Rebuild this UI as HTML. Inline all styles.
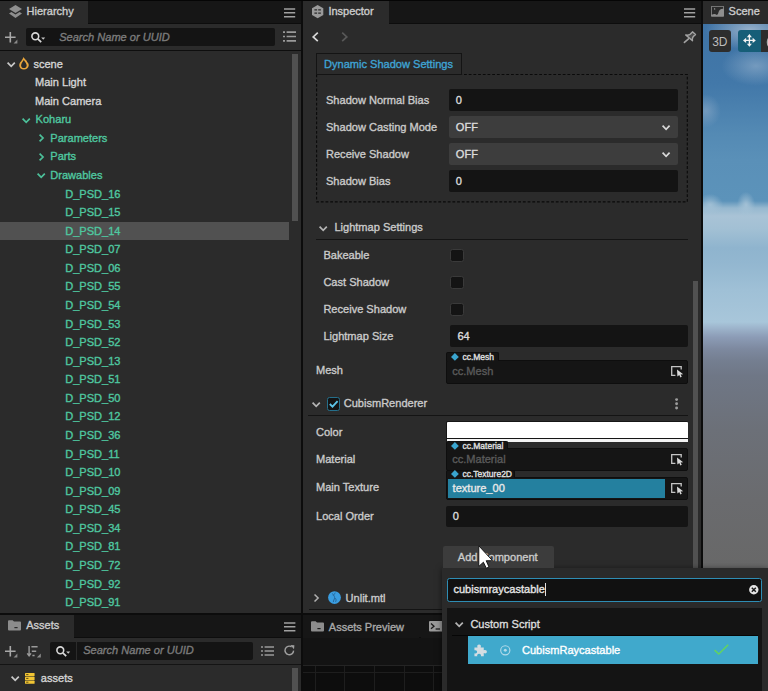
<!DOCTYPE html>
<html><head><meta charset="utf-8">
<style>
*{box-sizing:border-box;margin:0;padding:0}
html,body{width:768px;height:691px;overflow:hidden;background:#0c0c0c}
body{font-family:"Liberation Sans",Arial,sans-serif;font-size:11.06px;color:#cacaca;position:relative;-webkit-text-stroke:0.35px}
.a{position:absolute}
.panel{position:absolute;background:#2b2b2b}
.tabbar{position:absolute;background:#161616;border-bottom:1px solid #0d0d0d}
.tab{position:absolute;background:#2b2b2b}
.t{position:absolute;white-space:nowrap;line-height:14px;height:14px}
.tt{position:absolute;white-space:nowrap;line-height:14px;height:14px;font-size:11px;color:#cdcdcd}
.inp{position:absolute;background:#141414;border-radius:2px}
.sel{position:absolute;background:#3d3d3d;border-radius:2px}
.row{position:absolute;left:0;width:289px;height:18.57px;line-height:18.57px;white-space:nowrap}
.row span{position:absolute;top:0}
.g{color:#4fc8a0}
.w{color:#d4d4d4}
.ph{color:#7c7c7c;font-style:italic}
.chk{position:absolute;width:13.5px;height:12.8px;background:#141414;border:1.2px solid #3a3a3a;border-radius:2.5px}
.hr{position:absolute;height:1.2px;background:#141414}
.tag{position:absolute;background:#151515;border:1px solid #0e0e0e;border-bottom:none;border-radius:2px 2px 0 0;font-size:8.5px;color:#dcdcdc;line-height:7px;overflow:visible;white-space:nowrap;-webkit-text-stroke:0.4px}
.abox{position:absolute;background:#151515;border:1px solid #0e0e0e;border-radius:2px}
svg{position:absolute;overflow:visible}
</style></head><body>

<!-- HIERARCHY PANEL -->
<div class="panel" style="left:0;top:0;width:301.2px;height:612.9px"></div>
<div class="tabbar" style="left:0;top:0;width:301.2px;height:23.7px"></div>
<div class="tab" style="left:0;top:1px;width:88px;height:23px"></div>
<svg style="left:8.5px;top:4.5px" width="13" height="13.2" viewBox="0 0 13 13.2"><path d="M6.5 0L13 4L6.5 8L0 4Z" fill="#8e8e8e"/><path d="M0 8.4L2.4 6.9L6.5 9.5L10.6 6.9L13 8.4L6.5 13Z" fill="#8e8e8e"/></svg>
<div class="tt" style="left:26.6px;top:4.1px">Hierarchy</div>
<svg style="left:284px;top:8px" width="11.2" height="9.6" viewBox="0 0 11.2 9.6"><path d="M0 0.9H11.2M0 4.8H11.2M0 8.7H11.2" stroke="#a0a0a0" stroke-width="1.55"/></svg>
<!-- toolbar -->
<svg style="left:5px;top:32px" width="13" height="12" viewBox="0 0 13 12"><path d="M5.3 0V10.6M0 5.3H10.6" stroke="#a8a8a8" stroke-width="1.6"/><path d="M12.4 7.6V11.4H8.6Z" fill="#8a8a8a"/></svg>
<div class="inp" style="left:26px;top:28px;width:249.3px;height:17.9px"></div>
<svg style="left:31px;top:32px" width="15" height="12" viewBox="0 0 15 12"><circle cx="4.3" cy="4.3" r="3.4" fill="none" stroke="#d8d8d8" stroke-width="1.6"/><path d="M6.8 6.8L10.2 10.2" stroke="#d8d8d8" stroke-width="1.7"/><path d="M10.2 5.6H14.2L12.2 7.8Z" fill="#c8c8c8"/></svg>
<div class="t ph" style="left:59.2px;top:29.6px;font-size:11.06px">Search Name or UUID</div>
<svg style="left:283px;top:31px" width="13" height="11" viewBox="0 0 13 11"><path d="M3.6 1.2H13M3.6 5.5H13M3.6 9.8H13" stroke="#9a9a9a" stroke-width="1.7"/><path d="M0 1.2H2M0 5.5H2M0 9.8H2" stroke="#9a9a9a" stroke-width="1.7"/></svg>
<div class="hr" style="left:0;top:49.9px;width:301.2px;height:1.1px;background:#0e0e0e"></div>
<!-- scrollbar -->
<div class="a" style="left:292.4px;top:54px;width:5.6px;height:167.2px;background:#515151"></div>
<!-- selected row -->
<div class="a" style="left:0;top:221.8px;width:289px;height:18.6px;background:#515151"></div>
<div class="row" style="top:54.60px"><span class="w" style="left:33.4px">scene</span></div>
<div class="row" style="top:73.17px"><span class="w" style="left:35px">Main Light</span></div>
<div class="row" style="top:91.74px"><span class="w" style="left:35px">Main Camera</span></div>
<div class="row" style="top:110.31px"><span class="g" style="left:35.6px">Koharu</span></div>
<div class="row" style="top:128.88px"><span class="g" style="left:50.3px">Parameters</span></div>
<div class="row" style="top:147.45px"><span class="g" style="left:50.3px">Parts</span></div>
<div class="row" style="top:166.02px"><span class="g" style="left:50.3px">Drawables</span></div>
<div class="row" style="top:184.59px"><span class="g" style="left:65.2px">D_PSD_16</span></div>
<div class="row" style="top:203.16px"><span class="g" style="left:65.2px">D_PSD_15</span></div>
<div class="row" style="top:221.73px"><span class="g" style="left:65.2px">D_PSD_14</span></div>
<div class="row" style="top:240.30px"><span class="g" style="left:65.2px">D_PSD_07</span></div>
<div class="row" style="top:258.87px"><span class="g" style="left:65.2px">D_PSD_06</span></div>
<div class="row" style="top:277.44px"><span class="g" style="left:65.2px">D_PSD_55</span></div>
<div class="row" style="top:296.01px"><span class="g" style="left:65.2px">D_PSD_54</span></div>
<div class="row" style="top:314.58px"><span class="g" style="left:65.2px">D_PSD_53</span></div>
<div class="row" style="top:333.15px"><span class="g" style="left:65.2px">D_PSD_52</span></div>
<div class="row" style="top:351.72px"><span class="g" style="left:65.2px">D_PSD_13</span></div>
<div class="row" style="top:370.29px"><span class="g" style="left:65.2px">D_PSD_51</span></div>
<div class="row" style="top:388.86px"><span class="g" style="left:65.2px">D_PSD_50</span></div>
<div class="row" style="top:407.43px"><span class="g" style="left:65.2px">D_PSD_12</span></div>
<div class="row" style="top:426.00px"><span class="g" style="left:65.2px">D_PSD_36</span></div>
<div class="row" style="top:444.57px"><span class="g" style="left:65.2px">D_PSD_11</span></div>
<div class="row" style="top:463.14px"><span class="g" style="left:65.2px">D_PSD_10</span></div>
<div class="row" style="top:481.71px"><span class="g" style="left:65.2px">D_PSD_09</span></div>
<div class="row" style="top:500.28px"><span class="g" style="left:65.2px">D_PSD_45</span></div>
<div class="row" style="top:518.85px"><span class="g" style="left:65.2px">D_PSD_34</span></div>
<div class="row" style="top:537.42px"><span class="g" style="left:65.2px">D_PSD_81</span></div>
<div class="row" style="top:555.99px"><span class="g" style="left:65.2px">D_PSD_72</span></div>
<div class="row" style="top:574.56px"><span class="g" style="left:65.2px">D_PSD_92</span></div>
<div class="row" style="top:593.13px"><span class="g" style="left:65.2px">D_PSD_91</span></div>
<svg style="left:6.9px;top:61.8px" width="8.4" height="5.0" viewBox="0 0 8.4 5.0"><path d="M0.59 0.59L4.20 4.24L7.81 0.59" fill="none" stroke="#c8c8c8" stroke-width="1.7"/></svg>
<svg style="left:21.8px;top:117.6px" width="8.4" height="5.0" viewBox="0 0 8.4 5.0"><path d="M0.59 0.59L4.20 4.24L7.81 0.59" fill="none" stroke="#4cc09a" stroke-width="1.7"/></svg>
<svg style="left:38.8px;top:134.2px" width="4.8" height="8.0" viewBox="0 0 4.8 8.0"><path d="M0.59 0.59L4.04 4.00L0.59 7.41" fill="none" stroke="#4cc09a" stroke-width="1.7"/></svg>
<svg style="left:38.8px;top:152.8px" width="4.8" height="8.0" viewBox="0 0 4.8 8.0"><path d="M0.59 0.59L4.04 4.00L0.59 7.41" fill="none" stroke="#4cc09a" stroke-width="1.7"/></svg>
<svg style="left:36.7px;top:173.3px" width="8.4" height="5.0" viewBox="0 0 8.4 5.0"><path d="M0.59 0.59L4.20 4.24L7.81 0.59" fill="none" stroke="#4cc09a" stroke-width="1.7"/></svg>
<svg style="left:19.1px;top:56.6px" width="10" height="12.6" viewBox="0 0 10 12.6"><path fill-rule="evenodd" d="M4.6 0C5 1.4 6.4 2.4 7.4 3.4C8.2 4.2 7.8 4.8 8.4 5.2C9.4 6 9.9 7.4 9.7 8.7C9.4 11 7.2 12.6 4.9 12.6C2.4 12.6 0.2 10.9 0.2 8.2C0.2 5.7 2 4.5 3 2.9C3.6 1.9 4.2 0.9 4.6 0ZM4.8 3C5.6 4.6 7.7 6.4 7.7 8.4C7.7 10 6.4 11 4.9 11C3.4 11 2.1 10 2.1 8.4C2.1 6.4 3.9 4.8 4.8 3Z" fill="#e8a63c"/></svg>

<!-- INSPECTOR PANEL -->
<div class="panel" style="left:303px;top:0;width:397.8px;height:612.9px"></div>
<div class="tabbar" style="left:303px;top:0;width:397.8px;height:23.7px"></div>
<div class="tab" style="left:303px;top:1px;width:86.2px;height:23px"></div>
<svg style="left:311.8px;top:4.5px" width="11.3" height="13.3" viewBox="0 0 11.3 13.3"><path d="M5.65 0L11.3 3.3V10L5.65 13.3L0 10V3.3Z" fill="#9a9a9a"/><path d="M2.4 4.9H5.1M6.2 4.9H8.9M2.4 8.1H5.1M6.2 8.1H8.9" stroke="#2b2b2b" stroke-width="1.3"/></svg>
<div class="tt" style="left:328.4px;top:4.1px">Inspector</div>
<svg style="left:684px;top:8px" width="11.2" height="9.6" viewBox="0 0 11.2 9.6"><path d="M0 0.9H11.2M0 4.8H11.2M0 8.7H11.2" stroke="#a0a0a0" stroke-width="1.55"/></svg>
<svg style="left:312.4px;top:32.4px" width="7" height="10" viewBox="0 0 7 10"><path d="M5.8 0.6L1.2 4.9L5.8 9.2" fill="none" stroke="#d8d8d8" stroke-width="1.7"/></svg>
<svg style="left:340.8px;top:32.4px" width="7" height="10" viewBox="0 0 7 10"><path d="M1.2 0.6L5.8 4.9L1.2 9.2" fill="none" stroke="#585858" stroke-width="1.7"/></svg>
<svg style="left:684px;top:31px" width="12" height="12" viewBox="0 0 12 12"><path d="M1.7 3.9C4.6 4.6 6.6 3.6 8.5 0.8L11.5 3.6C8.6 5.4 7.8 7.2 8.5 9.8Z" fill="rgba(162,162,162,0.25)" stroke="#a2a2a2" stroke-width="1.4" stroke-linejoin="round"/><path d="M4.5 7.8L0.4 11.4" stroke="#a2a2a2" stroke-width="1.6" stroke-linecap="round"/></svg>

<svg style="left:316.2px;top:74px" width="372" height="129" viewBox="0 0 372 129"><path d="M0.6 0.5V127.9H371.3V0.5H145" fill="none" stroke="#0a0a0a" stroke-width="1.1" stroke-dasharray="2.8 1.9"/></svg>
<div class="a" style="left:316.2px;top:53.2px;width:145.4px;height:21.6px;border:1px solid #141414;background:#2b2b2b"></div>
<div class="t" style="left:324px;top:56.7px;color:#3fa3d4">Dynamic Shadow Settings</div>
<div class="t" style="left:326px;top:93.0px">Shadow Normal Bias</div><div class="inp" style="left:448.7px;top:88.9px;width:229.4px;height:22.1px"></div><div class="t" style="left:455.8px;top:93.0px;color:#dcdcdc">0</div>
<div class="t" style="left:326px;top:120.2px">Shadow Casting Mode</div><div class="sel" style="left:448.7px;top:116.1px;width:229.4px;height:22.1px"></div><div class="t" style="left:455.8px;top:120.2px;color:#dcdcdc">OFF</div>
<svg style="left:662px;top:124.8px" width="8.2" height="5" viewBox="0 0 8.2 5"><path d="M0.59 0.59L4.10 4.24L7.60 0.59" fill="none" stroke="#d8d8d8" stroke-width="1.7"/></svg>
<div class="t" style="left:326px;top:147.3px">Receive Shadow</div><div class="sel" style="left:448.7px;top:143.2px;width:229.4px;height:22.1px"></div><div class="t" style="left:455.8px;top:147.3px;color:#dcdcdc">OFF</div>
<svg style="left:662px;top:151.89999999999998px" width="8.2" height="5" viewBox="0 0 8.2 5"><path d="M0.59 0.59L4.10 4.24L7.60 0.59" fill="none" stroke="#d8d8d8" stroke-width="1.7"/></svg>
<div class="t" style="left:326px;top:174.4px">Shadow Bias</div><div class="inp" style="left:448.7px;top:170.3px;width:229.4px;height:22.1px"></div><div class="t" style="left:455.8px;top:174.4px;color:#dcdcdc">0</div>
<svg style="left:319.2px;top:225.6px" width="8.4" height="5.0" viewBox="0 0 8.4 5.0"><path d="M0.59 0.59L4.20 4.24L7.81 0.59" fill="none" stroke="#b4b4b4" stroke-width="1.7"/></svg>
<div class="t" style="left:334.4px;top:220.3px">Lightmap Settings</div>
<div class="hr" style="left:316.2px;top:238.5px;width:371.8px"></div>
<div class="t" style="left:323.4px;top:248.1px">Bakeable</div><div class="chk" style="left:450.2px;top:249.1px"></div>
<div class="t" style="left:323.4px;top:275.2px">Cast Shadow</div><div class="chk" style="left:450.2px;top:276.2px"></div>
<div class="t" style="left:323.4px;top:302.3px">Receive Shadow</div><div class="chk" style="left:450.2px;top:303.3px"></div>
<div class="t" style="left:323.4px;top:329px">Lightmap Size</div><div class="inp" style="left:450.3px;top:325.1px;width:237.7px;height:21.9px"></div><div class="t" style="left:457.4px;top:329px;color:#dcdcdc">64</div>
<div class="t" style="left:316px;top:363.3px">Mesh</div>
<div class="abox" style="left:445.8px;top:359.6px;width:242.2px;height:24.2px"></div>
<div class="tag" style="left:445.8px;top:352.2px;width:53.4px;height:8.4px;padding:0.8px 0 0 15.6px">cc.Mesh</div>
<svg style="left:451.2px;top:352.8px" width="7.8" height="7.8" viewBox="0 0 7 7"><path d="M3.5 0L7 3.5L3.5 7L0 3.5Z" fill="#3aa5cf"/></svg>
<div class="t" style="left:452.2px;top:364.1px;color:#5a5a5a">cc.Mesh</div>
<svg style="left:670.6px;top:366.2px" width="13" height="11.4" viewBox="0 0 13 11.4"><path d="M4.4 9.4H0.7V0.7H10.2V3.6" fill="none" stroke="#c4c4c4" stroke-width="1.3"/><path d="M6 3.4L12.2 8.2L9.6 8.4L10.8 10.8L9.4 11.4L8.3 9L6.4 10.6Z" fill="#d8d8d8"/></svg>
<svg style="left:311.6px;top:401.7px" width="8.4" height="5.0" viewBox="0 0 8.4 5.0"><path d="M0.59 0.59L4.20 4.24L7.81 0.59" fill="none" stroke="#b4b4b4" stroke-width="1.7"/></svg>
<div class="a" style="left:326.8px;top:397px;width:13.3px;height:13.6px;border:1.4px solid #256f8b;border-radius:2.5px;background:#141414"></div>
<svg style="left:328.8px;top:399.8px" width="9.4" height="8" viewBox="0 0 9.4 8"><path d="M0.8 4L3.5 6.6L8.6 1.2" fill="none" stroke="#5cc3e6" stroke-width="1.9"/></svg>
<div class="t" style="left:343.7px;top:396.2px">CubismRenderer</div>
<svg style="left:674.6px;top:398.2px" width="3.2" height="12" viewBox="0 0 3.2 12"><circle cx="1.6" cy="1.6" r="1.45" fill="#9c9c9c"/><circle cx="1.6" cy="5.8" r="1.45" fill="#9c9c9c"/><circle cx="1.6" cy="10" r="1.45" fill="#9c9c9c"/></svg>
<div class="hr" style="left:307.8px;top:414.9px;width:380.2px"></div>
<div class="t" style="left:316px;top:425.1px">Color</div>
<div class="a" style="left:445.8px;top:420.6px;width:242.6px;height:21.8px;background:#161616;border-radius:2px"></div>
<div class="a" style="left:447px;top:422px;width:240.6px;height:16.2px;background:#ffffff;border-radius:1px 1px 0 0"></div>
<div class="a" style="left:447px;top:439.3px;width:240.6px;height:2.6px;background:#f4f4f4"></div>
<div class="t" style="left:316px;top:451.7px">Material</div>
<div class="abox" style="left:445.8px;top:448.2px;width:242.2px;height:23px"></div>
<div class="tag" style="left:445.8px;top:440.6px;width:62px;height:8.6px;padding:1.2px 0 0 15.6px">cc.Material</div>
<svg style="left:451.2px;top:441.8px" width="7.8" height="7.8" viewBox="0 0 7 7"><path d="M3.5 0L7 3.5L3.5 7L0 3.5Z" fill="#3aa5cf"/></svg>
<div class="t" style="left:452.2px;top:452.4px;color:#5a5a5a">cc.Material</div>
<svg style="left:670.6px;top:454.2px" width="13" height="11.4" viewBox="0 0 13 11.4"><path d="M4.4 9.4H0.7V0.7H10.2V3.6" fill="none" stroke="#c4c4c4" stroke-width="1.3"/><path d="M6 3.4L12.2 8.2L9.6 8.4L10.8 10.8L9.4 11.4L8.3 9L6.4 10.6Z" fill="#d8d8d8"/></svg>
<div class="t" style="left:316px;top:480.3px">Main Texture</div>
<div class="abox" style="left:445.8px;top:477.2px;width:242.2px;height:23.1px"></div>
<div class="tag" style="left:445.8px;top:470px;width:69.6px;height:8.2px;padding:0.4px 0 0 15.6px">cc.Texture2D</div>
<svg style="left:451.2px;top:469.8px" width="7.8" height="7.8" viewBox="0 0 7 7"><path d="M3.5 0L7 3.5L3.5 7L0 3.5Z" fill="#3aa5cf"/></svg>
<div class="a" style="left:448.4px;top:479.2px;width:216.4px;height:18.6px;background:#24809f"></div>
<div class="t" style="left:452.6px;top:481.2px;color:#e8e8e8">texture_00</div>
<svg style="left:670.6px;top:482.8px" width="13" height="11.4" viewBox="0 0 13 11.4"><path d="M4.4 9.4H0.7V0.7H10.2V3.6" fill="none" stroke="#c4c4c4" stroke-width="1.3"/><path d="M6 3.4L12.2 8.2L9.6 8.4L10.8 10.8L9.4 11.4L8.3 9L6.4 10.6Z" fill="#d8d8d8"/></svg>
<div class="t" style="left:316px;top:508.5px">Local Order</div><div class="inp" style="left:446.4px;top:505.6px;width:241.6px;height:21.3px"></div><div class="t" style="left:452.8px;top:508.9px;color:#dcdcdc">0</div>
<div class="a" style="left:442.9px;top:546.2px;width:110.8px;height:22px;background:#3c3c3c;border-radius:2px 2px 0 0;z-index:2"></div><div class="t" style="left:457.8px;top:549.8px;z-index:2">Add Component</div>
<svg style="left:313.8px;top:594px" width="4.8" height="8" viewBox="0 0 4.8 8"><path d="M0.52 0.52L4.12 4.00L0.52 7.47" fill="none" stroke="#b0b0b0" stroke-width="1.5"/></svg>
<svg style="left:327.8px;top:591.4px" width="13" height="13.1" viewBox="0 0 13 13"><circle cx="6.5" cy="6.5" r="6.4" fill="#3a9de0"/><path d="M4.4 2.4C5 3.8 6.6 4.6 6.6 6.6C6.6 8.4 5.2 9.4 5.4 11M7.2 1.6C6.6 3.2 5.6 3.6 5.2 4.6M7 7C8.4 8 8.2 9.4 7.6 10.8" fill="none" stroke="#26679c" stroke-width="1"/></svg>
<div class="t" style="left:345.6px;top:590.9px">Unlit.mtl</div>
<div class="hr" style="left:308.6px;top:609.1px;width:137px"></div>
<div class="a" style="left:692.8px;top:281px;width:5.2px;height:290px;background:#515151"></div>

<!-- SCENE PANEL -->
<div class="panel" style="left:703px;top:0;width:65px;height:568px"></div>
<div class="a" style="left:703px;top:0;width:65px;height:1px;background:#171717"></div>
<svg style="left:711.3px;top:5.7px" width="13" height="10.8" viewBox="0 0 13 10.8"><rect x="0" y="0" width="13" height="10.8" rx="0.8" fill="#8e8e8e"/><path d="M0.8 0.8H12.2V2.8C9.6 2.6 8.2 4 7.6 6C7.2 7.6 6.8 8.6 5.8 9C4.6 7.6 2.4 7.6 0.8 8.8Z" fill="#2b2b2b"/><circle cx="3.6" cy="2.9" r="0.7" fill="#a8a8a8"/></svg>
<div class="tt" style="left:728.6px;top:4.1px">Scene</div>
<div class="a" id="sky" style="left:703px;top:23.7px;width:65px;height:544.3px;overflow:hidden;background:linear-gradient(#3f73a5 0px,#4278a9 60px,#548ab4 110px,#5a90b8 136px,#5c93ba 177px,#96b8cf 184px,#a9c3d6 192px,#a2c0d4 205px,#8fb4ce 224px,#93b7d0 240px,#9fc0d6 266px,#a8c6da 298px,#9fb7ce 303px,#8c9cb6 313px,#7d899f 325px,#747e90 337px,#6f7786 352px,#6c7078 406px,#6a6b6e 476px,#686868 544px)">
<div class="a" style="left:2px;top:-14px;width:90px;height:40px;background:radial-gradient(ellipse at center,rgba(165,186,208,0.85),rgba(165,186,208,0) 70%)"></div>
<div class="a" style="left:18px;top:22px;width:70px;height:40px;background:radial-gradient(ellipse at center,rgba(150,178,205,0.6),rgba(150,178,205,0) 70%)"></div>
<div class="a" style="left:-12px;top:70px;width:30px;height:34px;background:radial-gradient(ellipse at center,rgba(140,170,200,0.6),rgba(140,170,200,0) 70%)"></div>
<div class="a" style="left:34px;top:168px;width:18px;height:26px;background:radial-gradient(ellipse at center,rgba(165,194,214,0.95),rgba(165,194,214,0) 72%)"></div>
<div class="a" style="left:-6px;top:170px;width:26px;height:22px;background:radial-gradient(ellipse at center,rgba(165,194,214,0.9),rgba(165,194,214,0) 72%)"></div>
</div>
<div class="a" style="left:708.6px;top:30px;width:22.4px;height:21.8px;background:#2d2d2d;border-radius:3px"></div>
<div class="t" style="left:712.2px;top:34.6px;font-size:12px;color:#bcbcbc;-webkit-text-stroke:0">3D</div>
<div class="a" style="left:738.3px;top:30px;width:22.5px;height:21.8px;background:#165e78;border-radius:3px 0 0 3px"></div>
<div class="a" style="left:760.8px;top:30px;width:8px;height:21.8px;background:#2d2d2d"></div>
<svg style="left:765.6px;top:35.6px" width="6" height="11" viewBox="0 0 6 11"><path d="M5 1C1 2 0.6 8 3 10.4" fill="none" stroke="#b0b0b0" stroke-width="1.5"/></svg>
<svg style="left:743px;top:34.4px" width="12.8" height="12.8" viewBox="0 0 13 13"><path d="M6.5 0L9.1 3.2H7.2V5.8H9.8V3.9L13 6.5L9.8 9.1V7.2H7.2V9.8H9.1L6.5 13L3.9 9.8H5.8V7.2H3.2V9.1L0 6.5L3.2 3.9V5.8H5.8V3.2H3.9Z" fill="#f2f2f2"/></svg>

<!-- ASSETS PANEL -->
<div class="panel" style="left:0;top:614.8px;width:301.2px;height:77px"></div>
<div class="tabbar" style="left:0;top:614.8px;width:301.2px;height:22.9px"></div>
<div class="tab" style="left:0;top:614.8px;width:74px;height:23px"></div>
<svg style="left:8px;top:620.2px" width="13" height="11" viewBox="0 0 13 11"><path d="M0 1.2Q0 0.2 1 0.2H4.6L6 1.6H12Q13 1.6 13 2.6V9.6Q13 10.6 12 10.6H1Q0 10.6 0 9.6Z" fill="#8c8c8c"/><path d="M6.4 7.6H9.6" stroke="#2b2b2b" stroke-width="1.2"/></svg>
<div class="tt" style="left:26.2px;top:618.3px">Assets</div>
<svg style="left:284px;top:621.8px" width="11.4" height="9.6" viewBox="0 0 11.4 9.6"><path d="M0 0.9H11.4M0 4.8H11.4M0 8.7H11.4" stroke="#a0a0a0" stroke-width="1.5"/></svg>
<svg style="left:5px;top:645.8px" width="13" height="12" viewBox="0 0 13 12"><path d="M5.3 0V10.6M0 5.3H10.6" stroke="#a8a8a8" stroke-width="1.6"/><path d="M12.4 7.6V11.4H8.6Z" fill="#8a8a8a"/></svg>
<svg style="left:27.2px;top:645.6px" width="14" height="12" viewBox="0 0 14 12"><path d="M2.1 0V9.6M0.2 7.4L2.1 9.8L4 7.4" fill="none" stroke="#9a9a9a" stroke-width="1.4"/><path d="M4.4 0.8H10.6M4.8 5.2H9.2M5.4 9.4H7.6" stroke="#9a9a9a" stroke-width="1.5"/><path d="M13.8 7.4V11.4H9.8Z" fill="#8a8a8a"/></svg>
<div class="inp" style="left:50.2px;top:641.9px;width:202.4px;height:18.2px"></div>
<div class="a" style="left:76.3px;top:641.9px;width:1px;height:18.2px;background:#2b2b2b"></div>
<svg style="left:56.2px;top:645.8px" width="15" height="12" viewBox="0 0 15 12"><circle cx="4.3" cy="4.3" r="3.4" fill="none" stroke="#d8d8d8" stroke-width="1.6"/><path d="M6.8 6.8L10.2 10.2" stroke="#d8d8d8" stroke-width="1.7"/><path d="M10.2 5.6H14.2L12.2 7.8Z" fill="#c8c8c8"/></svg>
<div class="t ph" style="left:83.2px;top:643.3px">Search Name or UUID</div>
<svg style="left:261px;top:645.6px" width="13" height="10" viewBox="0 0 13 10"><path d="M3.6 1H13M3.6 5H13M3.6 9H13" stroke="#9a9a9a" stroke-width="1.6"/><path d="M0 1H2M0 5H2M0 9H2" stroke="#9a9a9a" stroke-width="1.6"/></svg>
<svg style="left:284px;top:645px" width="11" height="11" viewBox="0 0 11 11"><path d="M9.6 5.6A4.3 4.3 0 1 1 7.6 1.8" fill="none" stroke="#a0a0a0" stroke-width="1.4"/><path d="M6.4 0L10.4 0.2L10 4.2Z" fill="#a0a0a0"/></svg>
<div class="hr" style="left:0;top:664px;width:301.2px;height:1.4px"></div>
<div class="a" style="left:292.4px;top:668px;width:5.6px;height:24px;background:#515151"></div>
<div class="t w" style="left:40.8px;top:670.6px;color:#d4d4d4">assets</div>
<svg style="left:11px;top:675.9px" width="8.4" height="5.0" viewBox="0 0 8.4 5.0"><path d="M0.59 0.59L4.20 4.24L7.81 0.59" fill="none" stroke="#c8c8c8" stroke-width="1.7"/></svg>
<svg style="left:25px;top:673.1px" width="9.6" height="10.8" viewBox="0 0 9.6 10.8"><rect x="0" y="0" width="9.6" height="3.2" rx="0.6" fill="#f2c534"/><rect x="0" y="3.8" width="9.6" height="3.2" rx="0.6" fill="#f2c534"/><rect x="0" y="7.6" width="9.6" height="3.2" rx="0.6" fill="#f2c534"/><path d="M1.2 1.6H3.4M1.2 5.4H3.4M1.2 9.2H3.4" stroke="#5a4810" stroke-width="1"/></svg>

<!-- ASSETS PREVIEW PANEL -->
<div class="a" style="left:303px;top:614.8px;width:145px;height:77px;background:#141414"></div>
<div class="tabbar" style="left:303px;top:614.8px;width:145px;height:23px"></div>
<div class="tab" style="left:303px;top:614.8px;width:116.4px;height:23px;background:#161616"></div>
<div class="tab" style="left:420.6px;top:614.8px;width:30px;height:23px;background:#161616"></div>
<svg style="left:311.4px;top:620.7px" width="13" height="11" viewBox="0 0 13 11"><path d="M0 1.2Q0 0.2 1 0.2H4.6L6 1.6H12Q13 1.6 13 2.6V9.6Q13 10.6 12 10.6H1Q0 10.6 0 9.6Z" fill="#8c8c8c"/><path d="M6.4 7.6H9.6" stroke="#1c1c1c" stroke-width="1.2"/></svg>
<div class="tt" style="left:328.8px;top:619.6px;color:#a8a8a8">Assets Preview</div>
<svg style="left:429px;top:620.6px" width="14" height="11" viewBox="0 0 14 11"><rect x="0" y="0" width="14" height="10.4" rx="1" fill="#9a9a9a"/><path d="M2 2.6L5 5.2L2 7.8" fill="none" stroke="#1c1c1c" stroke-width="1.3"/><path d="M6.6 8H11" stroke="#1c1c1c" stroke-width="1.3"/></svg>
<div class="a" style="left:303px;top:637.6px;width:145px;height:28px;background:#131313"></div>
<div class="a" style="left:303px;top:665.6px;width:145px;height:26px;background:#0d0d0d"></div>
<div class="a" style="left:314.7px;top:665.6px;width:1px;height:26px;background:#1e1e1e"></div><div class="a" style="left:344px;top:665.6px;width:1px;height:26px;background:#1e1e1e"></div><div class="a" style="left:373.7px;top:665.6px;width:1px;height:26px;background:#1e1e1e"></div><div class="a" style="left:403.6px;top:665.6px;width:1px;height:26px;background:#1e1e1e"></div><div class="a" style="left:433.3px;top:665.6px;width:1px;height:26px;background:#1e1e1e"></div><div class="a" style="left:303px;top:671.8px;width:145px;height:1px;background:#1e1e1e"></div><div class="a" style="left:303px;top:664.8px;width:145px;height:1px;background:#242424"></div>

<!-- ADD COMPONENT POPUP -->
<div class="a" style="left:442.1px;top:568.1px;width:326px;height:123px;background:#2a2a2a;box-shadow:0 1px 6px rgba(0,0,0,0.55)"></div>
<div class="a" style="left:447px;top:608.2px;width:315px;height:83px;background:#141414"></div>
<div class="a" style="left:447px;top:577.6px;width:315px;height:24.2px;background:#111111;border:1.2px solid #2e8db4;border-radius:2.5px"></div>
<div class="t" style="left:453.4px;top:582.4px;color:#e4e4e4">cubismraycastable</div>
<div class="a" style="left:545.2px;top:583.2px;width:1px;height:13px;background:#e0e0e0"></div>
<svg style="left:749px;top:584.8px" width="10" height="10" viewBox="0 0 10 10"><circle cx="4.8" cy="4.8" r="4.7" fill="#e4e4e4"/><path d="M2.8 2.8L6.8 6.8M6.8 2.8L2.8 6.8" stroke="#1a1a1a" stroke-width="1.5"/></svg>
<div class="t" style="left:470.4px;top:616.8px;color:#dcdcdc">Custom Script</div>
<div class="hr" style="left:451.8px;top:634.7px;width:306.2px;background:#060606"></div>
<div class="a" style="left:468.3px;top:636px;width:289.7px;height:28.2px;background:#40a9cc"></div>
<div class="t" style="left:522px;top:642.8px;color:#ffffff">CubismRaycastable</div>
<svg style="left:714.4px;top:644px" width="15" height="11" viewBox="0 0 15 11"><path d="M0.6 6.2L4.8 10L14.2 0.8" fill="none" stroke="#62d35f" stroke-width="1.6"/></svg>
<svg style="left:454.6px;top:621.9px" width="8.4" height="5.0" viewBox="0 0 8.4 5.0"><path d="M0.59 0.59L4.20 4.24L7.81 0.59" fill="none" stroke="#b4b4b4" stroke-width="1.7"/></svg>
<svg style="left:473.6px;top:644px" width="13.3" height="12.7" viewBox="0 0 12 12" preserveAspectRatio="none"><path d="M0.4 3.4H3.2C2.4 1.4 3.4 0.4 4.6 0.4C5.8 0.4 6.8 1.4 6 3.4H8.8V6C10.6 5.2 11.6 6.2 11.6 7.3C11.6 8.4 10.6 9.4 8.8 8.6V11.6H6.2C6.8 10 5.8 9.2 4.6 9.2C3.4 9.2 2.4 10 3 11.6H0.4V8.8C2 9.4 2.8 8.4 2.8 7.4C2.8 6.4 2 5.4 0.4 6Z" fill="#d4dde2"/></svg>
<svg style="left:500.1px;top:645.2px" width="10.6" height="10.6" viewBox="0 0 10.6 10.6"><circle cx="5.3" cy="5.3" r="4.6" fill="none" stroke="#b4dbea" stroke-width="1.1"/><circle cx="5.3" cy="5.3" r="1.5" fill="#b4dbea"/></svg>
<svg style="left:477.7px;top:544.5px;z-index:3" width="16" height="25" viewBox="0 0 16 25"><path d="M0.8 0.8V21.4L5.4 17.2L8.3 23.2L11 22L8.2 15.7H14.5Z" fill="#ffffff" stroke="#0a0a0a" stroke-width="0.9" stroke-linejoin="round"/></svg>
<div class="a" style="left:0;top:0;width:768px;height:0.8px;background:#050505;z-index:5"></div>
</body></html>
